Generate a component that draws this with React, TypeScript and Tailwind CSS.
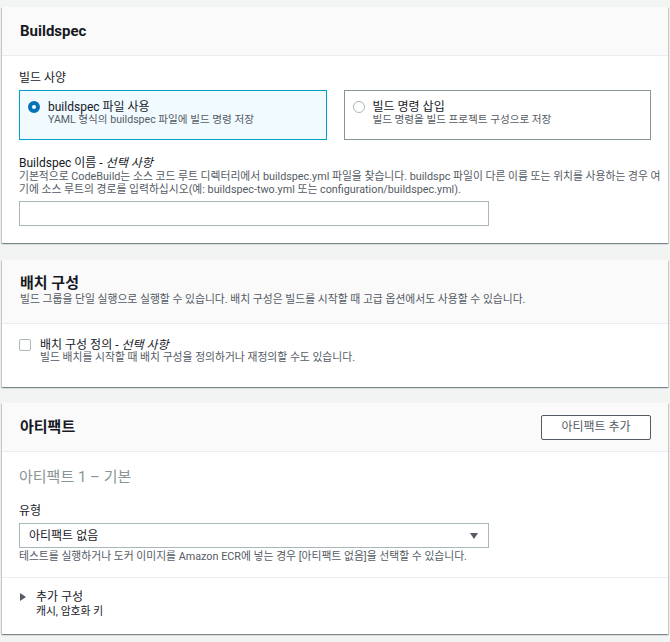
import { ReactNode } from "react";

const cardShadow =
  "shadow-[0_1px_1px_0_rgba(0,28,36,0.3),1px_1px_1px_0_rgba(0,28,36,0.15),-1px_1px_1px_0_rgba(0,28,36,0.15)]";

const Card = ({ children, className = "" }: { children: ReactNode; className?: string }) => (
    <section className={`bg-white ${cardShadow} ${className}`}>{children}</section>
);

const RadioTile = ({ selected, title, desc }: { selected: boolean; title: string; desc: string }) => (
    <div
        className={`h-[50px] border px-[8px] pt-[9px] flex gap-[8px] ${
            selected ? "border-[#00a1c9] bg-[#f1faff]" : "border-[#879596] bg-white"
        }`}
    >
        <span
            className={`mt-[1px] w-[12px] h-[12px] rounded-full shrink-0 bg-white ${
                selected ? "border-[4px] border-[#0073bb]" : "border border-[#aab7b8]"
            }`}
        />
        <div>
            <div className="text-[12px] leading-[14px] text-[#16191f]">{title}</div>
            <div className="text-[10.6px] leading-[12px] text-[#545b64]">{desc}</div>
        </div>
    </div>
);

const App = () => {
    return (
        <div className="min-h-screen bg-[#f2f3f3] px-[2px] pt-[7px] pb-[8px] font-[Roboto,'Noto_Sans_CJK_KR',sans-serif] text-[#16191f]">
            {/* Buildspec */}
            <Card>
                <div className="h-[49px] flex items-center px-[18px] bg-[#fafafa] border-b border-[#eaeded]">
                    <h2 className="text-[15px] font-bold">Buildspec</h2>
                </div>
                <div className="px-[17px] pt-[12px] pb-[17px]">
                    <div className="text-[12px] leading-[20px]">빌드 사양</div>
                    <div className="mt-[2px] grid grid-cols-2 gap-[17px]">
                        <RadioTile selected title="buildspec 파일 사용" desc="YAML 형식의 buildspec 파일에 빌드 명령 저장" />
                        <RadioTile selected={false} title="빌드 명령 삽입" desc="빌드 명령을 빌드 프로젝트 구성으로 저장" />
                    </div>
                    <div className="mt-[15px] text-[12px] leading-[16px]">
                        Buildspec 이름 - <i>선택 사항</i>
                    </div>
                    <div className="text-[10.8px] leading-[12.5px] text-[#545b64] whitespace-nowrap">
                        <div>
                            기본적으로 CodeBuild는 소스 코드 루트 디렉터리에서 buildspec.yml 파일을 찾습니다. buildspc 파일이 다른 이름 또는 위치를 사용하는 경우 여
                        </div>
                        <div>기에 소스 루트의 경로를 입력하십시오(예: buildspec-two.yml 또는 configuration/buildspec.yml).</div>
                    </div>
                    <input className="mt-[5px] block w-[470px] h-[25px] border border-[#aab7b8] bg-white outline-none px-[8px] text-[12px]" />
                </div>
            </Card>

            {/* 배치 구성 */}
            <Card className="mt-[17px]">
                <div className="px-[18px] pt-[13px] pb-[16px] bg-[#fafafa] border-b border-[#eaeded]">
                    <h2 className="text-[15px] font-bold leading-[20px]">배치 구성</h2>
                    <p className="text-[10.8px] leading-[14px] text-[#545b64]">
                        빌드 그룹을 단일 실행으로 실행할 수 있습니다. 배치 구성은 빌드를 시작할 때 고급 옵션에서도 사용할 수 있습니다.
                    </p>
                </div>
                <div className="px-[17px] pt-[14px] pb-[23px] flex gap-[9px]">
                    <span className="mt-[1px] w-[12px] h-[12px] shrink-0 border border-[#aab7b8] rounded-[2px] bg-white" />
                    <div>
                        <div className="text-[12px] leading-[14px]">
                            배치 구성 정의 - <i>선택 사항</i>
                        </div>
                        <div className="text-[10.8px] leading-[12px] text-[#545b64]">
                            빌드 배치를 시작할 때 배치 구성을 정의하거나 재정의할 수도 있습니다.
                        </div>
                    </div>
                </div>
            </Card>

            {/* 아티팩트 */}
            <Card className="mt-[16px]">
                <div className="h-[49px] flex items-center justify-between px-[17px] bg-[#fafafa] border-b border-[#eaeded]">
                    <h2 className="pl-px text-[15px] font-bold">아티팩트</h2>
                    <button className="w-[110px] h-[25px] border border-[#545b64] rounded-[2px] bg-white text-[12px] text-[#545b64]">
                        아티팩트 추가
                    </button>
                </div>
                <div className="px-[17px] pt-[15px] pb-[13px] border-b border-[#eaeded]">
                    <h3 className="text-[15px] leading-[20px] text-[#879596]">아티팩트 1 – 기본</h3>
                    <div className="mt-[16px] text-[12px] leading-[16px]">유형</div>
                    <div className="mt-[4px] w-[470px] h-[25px] border border-[#aab7b8] bg-white flex items-center justify-between pl-[9px] pr-[10px]">
                        <span className="text-[12px]">아티팩트 없음</span>
                        <svg width="8" height="6" viewBox="0 0 8 6">
                            <path d="M0 0h8L4 6z" fill="#545b64" />
                        </svg>
                    </div>
                    <p className="mt-[2px] text-[10.8px] leading-[14px] text-[#545b64]">
                        테스트를 실행하거나 도커 이미지를 Amazon ECR에 넣는 경우 [아티팩트 없음]을 선택할 수 있습니다.
                    </p>
                </div>
                <div className="px-[18px] pt-[11px] pb-[15px] flex gap-[10px]">
                    <svg width="6" height="8" viewBox="0 0 6 8" className="mt-[4px] shrink-0">
                        <path d="M0 0l6 4-6 4z" fill="#545b64" />
                    </svg>
                    <div>
                        <div className="text-[12px] leading-[16px]">추가 구성</div>
                        <div className="text-[10.8px] leading-[14px] text-[#16191f]">캐시, 암호화 키</div>
                    </div>
                </div>
            </Card>
        </div>
    );
};

export default App;
